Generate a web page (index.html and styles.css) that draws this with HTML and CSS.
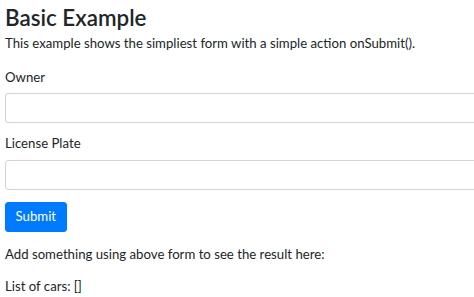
FILE: index.html
```html
<!DOCTYPE html>
<html lang="en">
<head>
<meta charset="utf-8">
<title>Basic Example</title>
<link rel="stylesheet" href="styles.css">
</head>
<body>
<main class="page">
  <h3 class="title">Basic Example</h3>
  <p class="lead">This example shows the simpliest form with a simple action onSubmit().</p>
  <form class="form">
    <div class="form-group">
      <label class="label" for="owner">Owner</label>
      <input class="input" id="owner" type="text">
    </div>
    <div class="form-group">
      <label class="label" for="plate">License Plate</label>
      <input class="input" id="plate" type="text">
    </div>
    <button class="btn" type="button">Submit</button>
  </form>
  <p class="text">Add something using above form to see the result here:</p>
  <p class="text">List of cars: []</p>
</main>
</body>
</html>
```
FILE: styles.css
```css
html, body {
  margin: 0;
  padding: 0;
  overflow: hidden;
  background: #fff;
}
body {
  font-family: Lato, "Open Sans", sans-serif;
  font-size: 13.2px;
  line-height: 1.5;
  color: #212529;
}
.page {
  width: 520px;
  padding: 0 0 0 5px;
}
.title {
  font-size: 22.4px;
  font-weight: 600;
  line-height: 1.2;
  margin: 5px 0 2px;
}
.lead {
  margin: 0 0 14px;
}
.form {
  display: flex;
  flex-direction: column;
  align-items: flex-start;
  margin-bottom: 13px;
}
.form-group {
  display: flex;
  flex-direction: column;
  align-self: stretch;
  margin-bottom: 11px;
}
.label {
  margin-bottom: 6px;
}
.input {
  box-sizing: border-box;
  height: 30px;
  border: 1px solid #ced4da;
  border-radius: 3px;
  padding: 4.8px 9.6px;
  font: inherit;
}
.btn {
  box-sizing: border-box;
  height: 30px;
  margin-top: 1px;
  font: inherit;
  color: #fff;
  background: #007bff;
  border: 1px solid #007bff;
  border-radius: 3px;
  padding: 0 9.6px;
}
.text {
  margin: 0 0 12px;
}
```
